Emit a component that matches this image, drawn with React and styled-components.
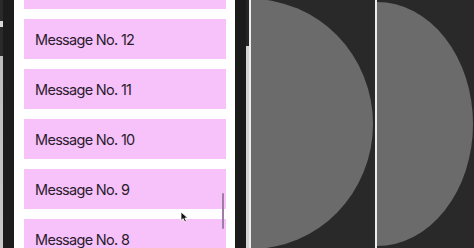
import React from "react";
import styled, { createGlobalStyle } from "styled-components";

const GlobalStyle = createGlobalStyle`
  html, body {
    margin: 0;
    padding: 0;
    background: #1c1c1c;
    overflow: hidden;
  }
  * {
    box-sizing: border-box;
  }
`;

const Screen = styled.div`
  width: 474px;
  height: 248px;
  display: flex;
  overflow: hidden;
  background: #1c1c1c;
`;

const EdgeStrip = styled.div`
  width: 14px;
  height: 100%;
  display: flex;
`;

const EdgeSliver = styled.div`
  width: 3px;
  height: 100%;
  background: linear-gradient(
    to bottom,
    #2a2a2a 0px,
    #2a2a2a 21px,
    #d8d8d8 21px,
    #d8d8d8 27px,
    #2a2a2a 27px,
    #2a2a2a 56px,
    #bdbdbd 56px,
    #c9c9c9 100%
  );
`;

const Phone = styled.div`
  width: 221px;
  height: 100%;
  background: #ffffff;
  position: relative;
  overflow: hidden;
`;

const MessageList = styled.div`
  display: flex;
  flex-direction: column;
  gap: 10px;
  padding: 0 9px 0 10px;
  margin-top: -31px;
`;

const MessageCard = styled.div`
  height: 40px;
  flex-shrink: 0;
  display: flex;
  align-items: center;
  padding-left: 11px;
  background: #f7c2fa;
  color: #2a1b2d;
  font-family: Inter, "Noto Sans", sans-serif;
  font-size: 14.5px;
  letter-spacing: -0.7px;
`;

const ScrollThumb = styled.div`
  position: absolute;
  left: 208px;
  top: 193px;
  width: 2px;
  height: 36px;
  border-radius: 1px;
  background: #a27ca9;
`;

const Cursor = styled.svg`
  position: absolute;
  left: 166px;
  top: 211px;
`;

const Divider = styled.div`
  width: 16px;
  height: 100%;
  display: flex;
`;

const DarkBand = styled.div`
  width: 11px;
  height: 100%;
  background: #1b1b1b;
`;

const LightRail = styled.div`
  width: 3px;
  height: 100%;
  background: linear-gradient(
    to bottom,
    #242424 0px,
    #242424 46px,
    #d4d4d4 46px,
    #d4d4d4 100%
  );
`;

const WhiteLine = styled.div`
  width: ${(p) => p.$w}px;
  height: 100%;
  background: #ececec;
`;

const Canvas = styled.div`
  flex: 1;
  height: 100%;
  display: flex;
  background: #292929;
`;

const Pane = styled.div`
  width: ${(p) => p.$w}px;
  height: 100%;
  display: flex;
  align-items: center;
`;

const HalfDisc = styled.div`
  width: ${(p) => p.$rx}px;
  height: ${(p) => p.$ry * 2}px;
  background: #6b6b6b;
  border-radius: 0 ${(p) => p.$rx}px ${(p) => p.$rx}px 0 /
    0 ${(p) => p.$ry}px ${(p) => p.$ry}px 0;
`;

const messages = [13, 12, 11, 10, 9, 8];

export default function App() {
  return (
    <>
      <GlobalStyle />
      <Screen>
        <EdgeStrip>
          <EdgeSliver />
        </EdgeStrip>
        <Phone>
          <MessageList>
            {messages.map((n) => (
              <MessageCard key={n}>Message No. {n}</MessageCard>
            ))}
          </MessageList>
          <ScrollThumb />
          <Cursor width="10" height="12" viewBox="0 0 10 12">
            <path
              d="M1 1 L1 9.5 L3.2 7.6 L4.8 11 L6.4 10.3 L4.9 7 L7.8 7 Z"
              fill="#111"
              stroke="#fff"
              strokeWidth="0.8"
              strokeLinejoin="round"
            />
          </Cursor>
        </Phone>
        <Divider>
          <DarkBand />
          <LightRail />
          <WhiteLine $w={2} />
        </Divider>
        <Canvas>
          <Pane $w={124}>
            <HalfDisc $rx={122} $ry={125} />
          </Pane>
          <WhiteLine $w={2} />
          <Pane $w={97}>
            <HalfDisc $rx={96} $ry={122} />
          </Pane>
        </Canvas>
      </Screen>
    </>
  );
}
